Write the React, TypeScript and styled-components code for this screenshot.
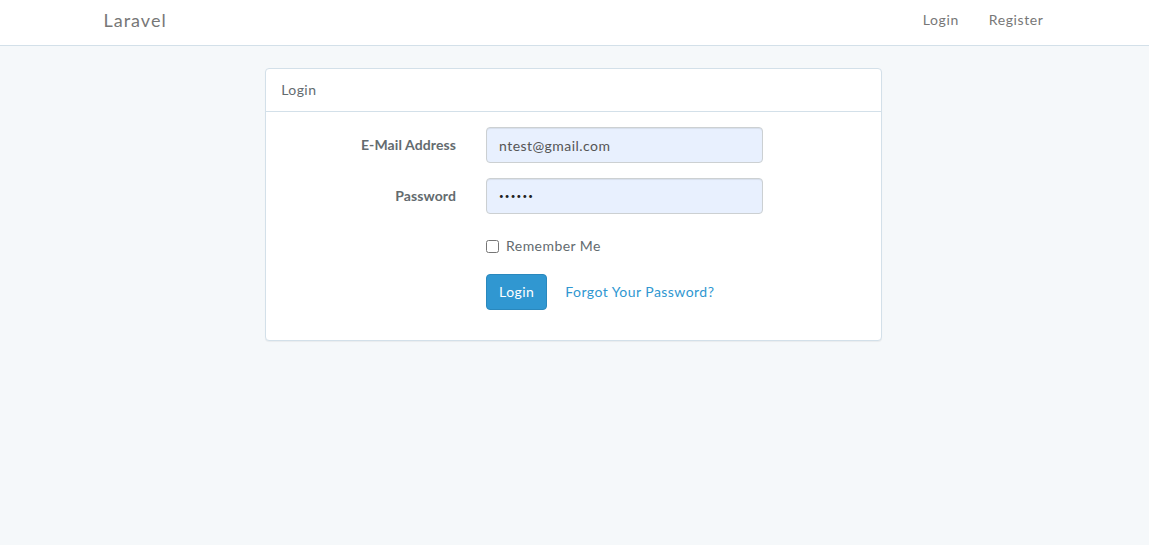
import styled, { createGlobalStyle } from 'styled-components'

const GlobalStyle = createGlobalStyle`
  * { box-sizing: border-box; }
  html, body { margin: 0; padding: 0; }
  body {
    background: #f5f8fa;
    font-family: Lato, "Open Sans", sans-serif;
    font-size: 14px;
    line-height: 1.6;
    letter-spacing: 0.45px;
    color: #636b6f;
    min-height: 545px;
  }
`

export default function App() {
  return (
    <>
      <GlobalStyle />
      <Navbar>
        <Container>
          <Brand href="#">Laravel</Brand>
          <NavLinks>
            <NavLink href="#">Login</NavLink>
            <NavLink href="#">Register</NavLink>
          </NavLinks>
        </Container>
      </Navbar>

      <Container>
        <Row>
          <Col>
            <Panel>
              <PanelHeading>Login</PanelHeading>
              <PanelBody>
                <FormRow>
                  <Label htmlFor="email">E-Mail Address</Label>
                  <Cell>
                    <Input id="email" type="email" defaultValue="ntest@gmail.com" />
                  </Cell>
                </FormRow>

                <FormRow>
                  <Label htmlFor="password">Password</Label>
                  <Cell>
                    <Input id="password" type="password" defaultValue="secret" $secret />
                  </Cell>
                </FormRow>

                <FormRow>
                  <span />
                  <Cell>
                    <CheckLabel>
                      <input type="checkbox" /> Remember Me
                    </CheckLabel>
                  </Cell>
                </FormRow>

                <FormRow>
                  <span />
                  <Actions>
                    <BtnPrimary type="button">Login</BtnPrimary>
                    <LinkBtn href="#">Forgot Your Password?</LinkBtn>
                  </Actions>
                </FormRow>
              </PanelBody>
            </Panel>
          </Col>
        </Row>
      </Container>
    </>
  )
}

const Navbar = styled.nav`
  background: #fff;
  border-bottom: 1px solid #d3e0e9;
  height: 46px;
  margin-bottom: 22px;
`

const Container = styled.div`
  width: 970px;
  margin: 0 0 0 calc(50% - 486px);
  padding: 0 15px;
  display: flex;
  align-items: center;
  justify-content: space-between;
  height: 100%;
`

const Brand = styled.a`
  font-size: 18px;
  letter-spacing: 1px;
  color: #777;
  text-decoration: none;
  line-height: 20px;
  padding-bottom: 6px;
`

const NavLinks = styled.div`
  display: flex;
  margin-right: -15px;
`

const NavLink = styled.a`
  padding: 0 15px 4px;
  color: #777;
  text-decoration: none;
  font-size: 14px;
  letter-spacing: 0.6px;
`

const Row = styled.div`
  margin: 0 -15px;
  flex: 0 0 auto;
  width: calc(100% + 30px);
`

const Col = styled.div`
  width: 66.6667%;
  margin-left: 16.6667%;
  padding: 0 15px;
`

const Panel = styled.div`
  background: #fff;
  border: 1px solid #d3e0e9;
  border-radius: 4px;
  box-shadow: 0 1px 1px rgba(0, 0, 0, 0.05);
`

const PanelHeading = styled.div`
  padding: 10px 15px;
  border-bottom: 1px solid #d3e0e9;
  line-height: 22px;
  color: #636b6f;
`

const PanelBody = styled.div`
  padding: 15px;
`

const FormRow = styled.div`
  display: grid;
  grid-template-columns: 33.3333% 50%;
  margin: 0 -15px 15px;
`

const Label = styled.label`
  padding: 7px 15px 0;
  text-align: right;
  font-weight: 700;
  letter-spacing: 0.1px;
  line-height: 22px;
`

const Cell = styled.div`
  padding: 0 15px;
`

const Input = styled.input<{ $secret?: boolean }>`
  display: block;
  width: 100%;
  height: 36px;
  padding: 6px 12px;
  font-family: inherit;
  font-size: ${p => (p.$secret ? '8px' : '14px')};
  letter-spacing: ${p => (p.$secret ? '1.2px' : '0.45px')};
  color: ${p => (p.$secret ? '#222' : '#555')};
  background: #e8f0fe;
  border: 1px solid #ccd0d2;
  border-radius: 4px;
  box-shadow: inset 0 1px 1px rgba(0, 0, 0, 0.075);
  outline: none;
`

const CheckLabel = styled.label`
  display: flex;
  align-items: center;
  gap: 7px;
  padding: 6px 0 2px;
  line-height: 22px;
  min-height: 30px;
  input { margin: 0; width: 13px; height: 13px; }
`

const Actions = styled.div`
  padding: 0 15px;
  display: flex;
  align-items: center;
`

const BtnPrimary = styled.button`
  height: 36px;
  padding: 6px 12px;
  background: #3097d1;
  border: 1px solid #2a88bd;
  border-radius: 4px;
  color: #fff;
  font-family: inherit;
  font-size: 14px;
  letter-spacing: 0.45px;
  line-height: 22px;
`

const LinkBtn = styled.a`
  padding: 6px 12px;
  margin-left: 6px;
  color: #3097d1;
  text-decoration: none;
  font-size: 14px;
`
